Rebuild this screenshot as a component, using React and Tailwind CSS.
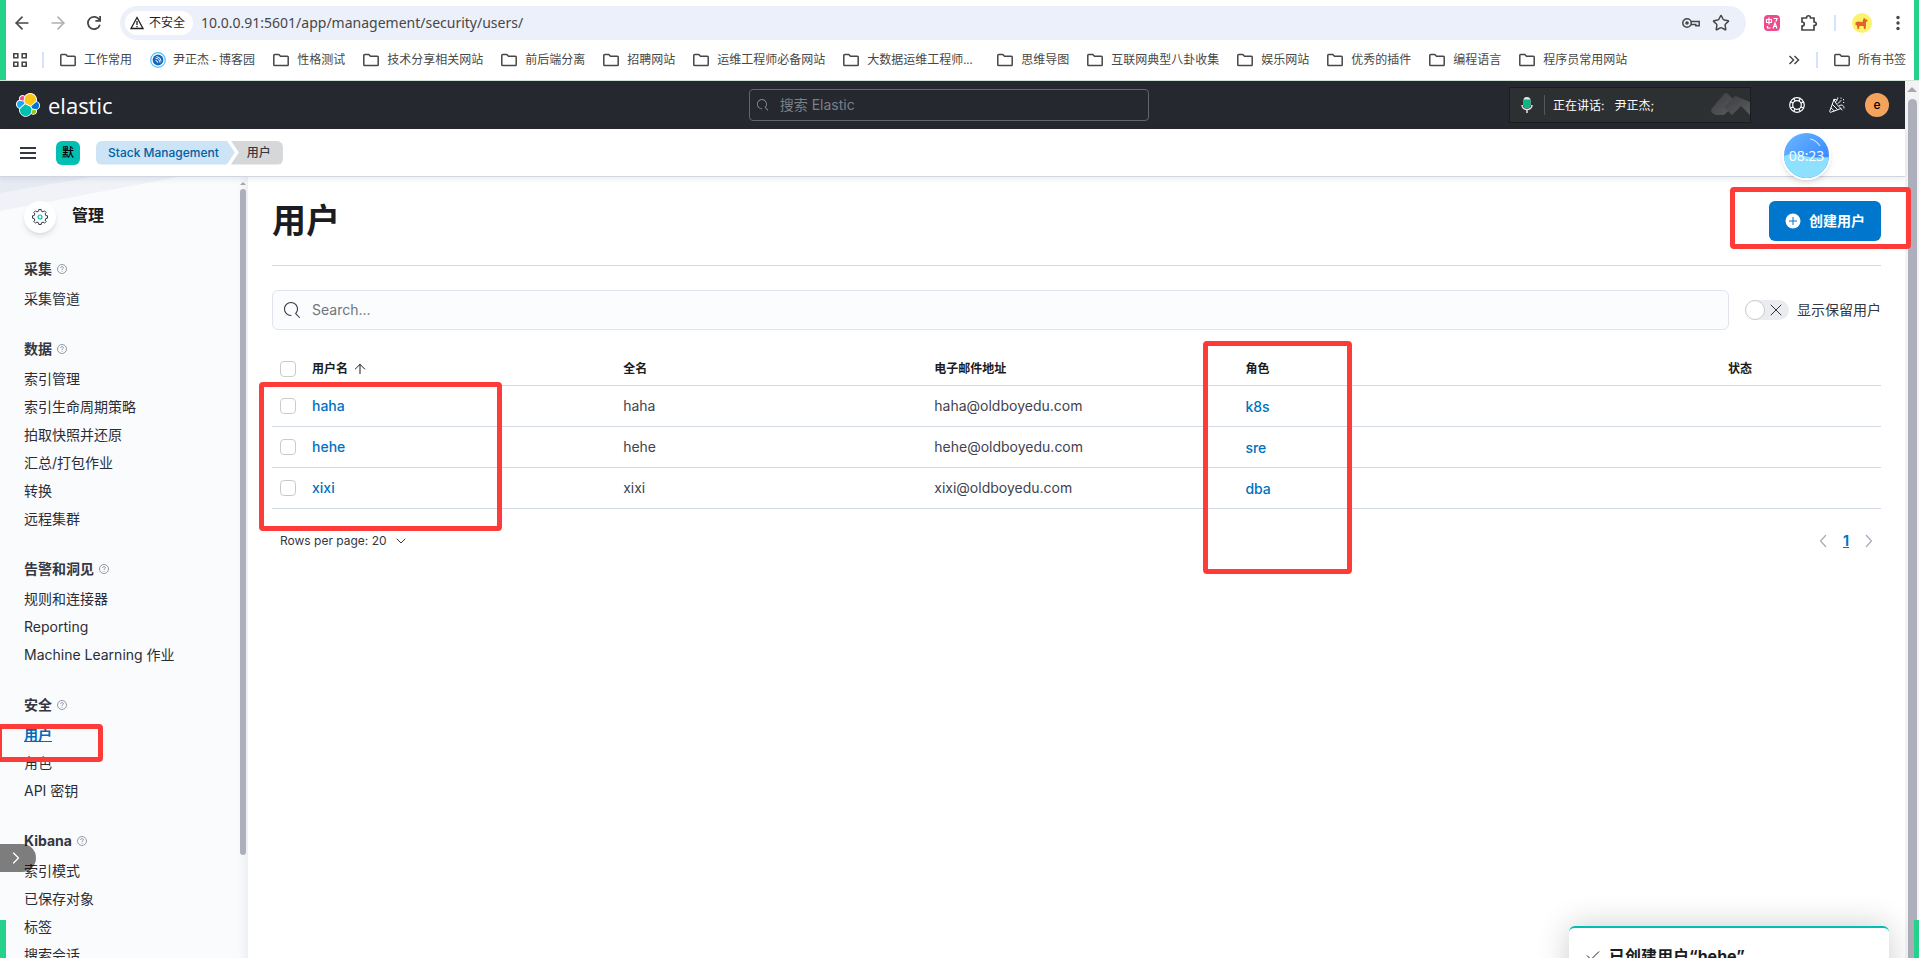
import React from 'react';
import { ArrowLeft, ArrowRight, ArrowUp, ChevronDown, ChevronRight, Star, X } from 'lucide-react';

const bookmarks = [
  { label: '工作常用' },
  { label: '尹正杰 - 博客园', blog: true },
  { label: '性格测试' },
  { label: '技术分享相关网站' },
  { label: '前后端分离' },
  { label: '招聘网站' },
  { label: '运维工程师必备网站' },
  { label: '大数据运维工程师...', wide: true },
  { label: '思维导图' },
  { label: '互联网典型八卦收集' },
  { label: '娱乐网站' },
  { label: '优秀的插件' },
  { label: '编程语言' },
  { label: '程序员常用网站' },
];

const sections = [
  { title: '采集', items: ['采集管道'] },
  { title: '数据', items: ['索引管理', '索引生命周期策略', '拍取快照并还原', '汇总/打包作业', '转换', '远程集群'] },
  { title: '告警和洞见', items: ['规则和连接器', 'Reporting', 'Machine Learning 作业'] },
  { title: '安全', items: ['用户', '角色', 'API 密钥'] },
  { title: 'Kibana', items: ['索引模式', '已保存对象', '标签', '搜索会话'] },
];

const users = [
  { name: 'haha', email: 'haha@oldboyedu.com', role: 'k8s' },
  { name: 'hehe', email: 'hehe@oldboyedu.com', role: 'sre' },
  { name: 'xixi', email: 'xixi@oldboyedu.com', role: 'dba' },
];

const checkbox = 'block size-4 appearance-none rounded border border-[#c9cbcd] bg-white';

function gearPath(teeth, outer, inner) {
  const step = (Math.PI * 2) / teeth;
  const points = [];
  for (let i = 0; i < teeth; i++) {
    [[-0.3, inner], [-0.2, outer], [0.2, outer], [0.3, inner]].forEach(([t, r]) => {
      const a = (i + t) * step;
      points.push(`${(8 + r * Math.sin(a)).toFixed(2)} ${(8 - r * Math.cos(a)).toFixed(2)}`);
    });
  }
  return `M${points.join('L')}Z`;
}

function FolderIcon() {
  return (
    <svg className="size-4 shrink-0" viewBox="0 0 16 16" fill="none" stroke="#474747" strokeWidth="1.5">
      <path d="M.8 3.2c0-.5.3-.8.8-.8h4.2l1.7 1.8h6.9c.5 0 .8.3.8.8v7.8c0 .5-.3.8-.8.8H1.6c-.5 0-.8-.3-.8-.8z" />
    </svg>
  );
}

function BlogIcon() {
  return (
    <svg className="size-4 shrink-0" viewBox="0 0 16 16">
      <circle cx="8" cy="8" r="7.3" fill="#fff" stroke="#4cc3f5" strokeWidth="1.2" />
      <circle cx="8" cy="8" r="5.4" fill="#1565c0" />
      <path d="M5.5 6.2a4.5 4.5 0 0 1 4.5 4.5M5.5 8.5a2.2 2.2 0 0 1 2.2 2.2M6.5 4.5a5.5 5.5 0 0 1 4.7 4.7" fill="none" stroke="#fff" />
    </svg>
  );
}

function SearchIcon({ className }) {
  return (
    <svg className={className} viewBox="0 0 16 16" fill="currentColor">
      <path d="M11.271 11.978l3.872 3.873a.502.502 0 00.708 0 .502.502 0 000-.708l-3.565-3.564c2.38-2.747 2.267-6.923-.342-9.532-2.73-2.73-7.17-2.73-9.898 0-2.728 2.729-2.728 7.17 0 9.9a6.955 6.955 0 004.949 2.05.5.5 0 000-1 5.96 5.96 0 01-4.242-1.757 6.01 6.01 0 010-8.486 6.004 6.004 0 018.484 0 6.01 6.01 0 010 8.486.5.5 0 00.034.738z" />
    </svg>
  );
}

function ElasticLogo() {
  return (
    <svg className="size-6" viewBox="0 0 32 32">
      <path fill="#fff" d="M32 16.77a6.334 6.334 0 00-1.14-3.63 6.269 6.269 0 00-3.02-2.3 9.098 9.098 0 00-.873-5.965A9.05 9.05 0 0022.56.746a9.007 9.007 0 00-5.994-.419 9.04 9.04 0 00-4.93 3.445 4.789 4.789 0 00-5.78-.07 4.833 4.833 0 00-1.672 2.34 4.85 4.85 0 00.024 2.879A6.383 6.383 0 001.15 11.23 6.424 6.424 0 000 14.9a6.35 6.35 0 001.144 3.646 6.284 6.284 0 003.04 2.304 9.15 9.15 0 00.88 5.966 9.1 9.1 0 004.412 4.127 9.058 9.058 0 005.994.418 9.09 9.09 0 004.93-3.45 4.774 4.774 0 005.776.077 4.82 4.82 0 001.67-2.34 4.836 4.836 0 00-.02-2.874 6.383 6.383 0 003.03-2.313A6.424 6.424 0 0032 16.77" />
      <path fill="#FEC514" d="M12.58 13.787l7.002 3.211 7.066-6.213a7.849 7.849 0 00.152-1.557c0-1.692-.538-3.339-1.534-4.7a7.915 7.915 0 00-4.012-2.868 7.872 7.872 0 00-4.92.08 7.912 7.912 0 00-3.918 3l-1.174 6.117 1.338 2.93z" />
      <path fill="#00BFB3" d="M5.333 21.228A7.964 7.964 0 005.18 22.8a7.98 7.98 0 001.54 4.722 7.944 7.944 0 004.03 2.883 7.903 7.903 0 004.943-.08 7.943 7.943 0 003.937-3.012l1.166-6.102-1.555-2.985-7.03-3.211-6.877 6.213z" />
      <path fill="#F04E98" d="M5.288 9.067l4.8 1.137L11.14 4.73a3.785 3.785 0 00-4.538-.023A3.82 3.82 0 005.288 9.067z" />
      <path fill="#1BA9F5" d="M4.872 10.214a5.294 5.294 0 00-2.594 1.93 5.325 5.325 0 00-.137 5.89 5.29 5.29 0 002.51 2.038l6.733-6.1-1.235-2.65-5.277-1.108z" />
      <path fill="#93C90E" d="M20.873 27.307a3.736 3.736 0 002.285.785 3.783 3.783 0 003.101-1.63 3.812 3.812 0 00.45-3.476l-4.8-1.125-1.036 5.446z" />
      <path fill="#0077CC" d="M21.848 20.563l5.28 1.238a5.34 5.34 0 002.622-1.937 5.37 5.37 0 001.023-3.1 5.31 5.31 0 00-.954-3.036 5.28 5.28 0 00-2.473-1.994l-6.904 6.067 1.406 2.762z" />
    </svg>
  );
}

function BrowserBar() {
  return (
    <div className="shrink-0 border-b border-[#d3e3d8] bg-white text-[#474747] [font-family:'Open_Sans','Noto_Sans_CJK_SC',sans-serif]">
      <div className="border-l-[6px] border-r-[5px] border-[#26d18c]">
        {/* Address row */}
        <div className="flex items-center py-1.5 pl-1.5">
          <div className="flex items-center gap-4">
            <button aria-label="后退"><ArrowLeft className="size-5" strokeWidth={2} /></button>
            <button aria-label="前进" className="text-[#b0b0b0]"><ArrowRight className="size-5" strokeWidth={2} /></button>
            <button aria-label="刷新">
              <svg className="size-5" viewBox="-1 -1 18 18" fill="none" stroke="currentColor" strokeWidth="1.6">
                <path d="M13.3 9.5A5.5 5.5 0 1 1 12.8 5.2M13.5 1.8v4.2H9.2" />
              </svg>
            </button>
          </div>
          <div className="ml-4 flex h-[34px] flex-1 items-center rounded-full bg-[#ecf0fa] pl-[5px] pr-4">
            <button className="flex h-6 items-center gap-[5px] rounded-full bg-white pr-2 pl-[5px] text-xs text-[#1f1f1f]">
              <svg className="size-3.5" viewBox="0 0 14 14" fill="none" stroke="currentColor" strokeWidth="1.3">
                <path d="M7 1.5 13 12.5H1zM7 5v4M7 10v1.3" />
              </svg>
              不安全
            </button>
            <input
              aria-label="地址"
              className="ml-2 flex-1 bg-transparent text-sm outline-none [font-family:'Noto_Sans',sans-serif]"
              defaultValue="10.0.0.91:5601/app/management/security/users/"
            />
            <svg className="h-4 w-[18px]" viewBox="0 0 18 16" fill="none" stroke="currentColor" strokeWidth="1.5">
              <circle cx="5" cy="8" r="4.2" />
              <circle cx="5" cy="8" r="1.8" fill="currentColor" stroke="none" />
              <path d="M9 6.5h8.2v4.2h-3.4V9.5H9" />
            </svg>
            <Star className="ml-3 size-[18px]" strokeWidth={2} />
          </div>
          <div className="flex items-center pl-[18px] pr-1.5">
            <span className="flex size-4 items-center justify-center rounded-sm bg-[#ec4b8c]">
              <svg className="size-4" viewBox="0 0 16 16" fill="none" stroke="#fff" strokeWidth="1.2">
                <path d="M2.5 4.5h5v3h-5zM5 2.5v7M9.5 3.5h3.5l-1 3M3.5 11v2h3M9 13.5l2-5.5 2 5.5M9.8 11.5h2.5" />
              </svg>
            </span>
            <svg className="ml-5 size-[18px]" viewBox="0 0 18 18" fill="none" stroke="currentColor" strokeWidth="1.7">
              <path d="M2 4h4.5c0-3 4-3 4 0H14v4c3 0 3 3.5 0 3.5V16H2v-4c3 0 3-4 0-4z" />
            </svg>
            <span className="ml-4 h-4 w-0.5 bg-[#d3e3fd]" />
            <svg className="ml-4 size-5" viewBox="0 0 20 20">
              <circle cx="10" cy="10" r="10" fill="#fdf36b" />
              <path d="M3.5 9.5l2-1 5 .5.5-2 1-2.500 1 1.500 1.500.5 1.500 1.500-2 1v3.500l-.5 3.500h-1.500l-.5-3H7.500l-.5 3H5.500L5 12.500l-1.500-.5z" fill="#e2622b" />
            </svg>
            <svg className="ml-4 h-4 w-5" viewBox="0 0 20 16" fill="currentColor">
              <circle cx="10" cy="2.5" r="1.7" /><circle cx="10" cy="8" r="1.7" /><circle cx="10" cy="13.5" r="1.7" />
            </svg>
          </div>
        </div>

        {/* Bookmarks */}
        <div className="flex h-[34px] items-center pb-1.5 pl-[7px] pr-2 text-xs">
          <svg className="size-3.5" viewBox="0 0 14 14" fill="none" stroke="currentColor" strokeWidth="1.6">
            <path d="M.8.8h4v4h-4zM9.2.8h4v4h-4zM.8 9.2h4v4h-4zM9.2 9.2h4v4h-4z" />
          </svg>
          <span className="ml-[15px] mr-4 h-4 w-0.5 bg-[#d3e3fd]" />
          <div className="flex flex-1 gap-[18px] overflow-hidden">
            {bookmarks.map((b) => (
              <a key={b.label} href="#" className={b.wide ? 'flex w-[136px] items-center gap-2 whitespace-nowrap' : b.blog ? 'flex items-center gap-[7px] whitespace-nowrap' : 'flex items-center gap-2 whitespace-nowrap'}>
                {b.blog ? <BlogIcon /> : <FolderIcon />}
                {b.label}
              </a>
            ))}
          </div>
          <svg className="size-3" viewBox="0 0 12 12" fill="none" stroke="currentColor" strokeWidth="1.5">
            <path d="M1.5 2l4 4-4 4M6.5 2l4 4-4 4" />
          </svg>
          <span className="ml-4 mr-4 h-4 w-0.5 bg-[#d3e3fd]" />
          <a href="#" className="flex items-center gap-2"><FolderIcon />所有书签</a>
        </div>
      </div>
    </div>
  );
}

function TopHeader() {
  return (
    <header className="grid h-12 shrink-0 grid-cols-[1fr_400px_1fr_8px] items-center bg-[#25282f] px-4">
      <a href="#" className="flex items-center gap-2 text-white">
        <ElasticLogo />
        <span className="text-[22px] leading-6 [font-family:'Open_Sans',sans-serif]">elastic</span>
      </a>
      <div className="flex h-8 items-center gap-3 rounded border border-[#63666c] px-[7px] text-[#81858f]">
        <SearchIcon className="size-3 text-[#9a9da3]" />
        <input aria-label="搜索 Elastic" placeholder="搜索 Elastic" className="w-full bg-transparent text-sm outline-none placeholder:text-[#7b7f87]" />
      </div>
      <div className="col-span-2 flex items-center justify-end">
        {/* Speaking indicator of the meeting app */}
        <div className="relative flex h-9 w-[242px] items-center overflow-hidden border border-[#1b1c1e] bg-[#2d3033] pl-2.5 text-xs text-white">
          <svg className="h-4 w-3.5" viewBox="0 0 14 16" fill="none">
            <rect x="3.5" y="0" width="7" height="11" rx="3.5" fill="#e6e6e6" />
            <path d="M3.5 2.5h7v5a3.5 3.5 0 0 1-7 0z" fill="#0bb680" />
            <path d="M2 8c0 6 10 6 10 0M7 12.5V16" stroke="#e6e6e6" strokeWidth="1.5" />
          </svg>
          <span className="ml-2.5 mr-2 h-5 w-px bg-[#54575a]" />
          <span className="pt-0.5">正在讲话:</span>
          <span className="ml-2.5 pt-0.5">尹正杰;</span>
          <svg className="absolute right-0 bottom-1.5 h-6 w-10" viewBox="0 0 40 24">
            <defs>
              <linearGradient id="peak" x1="0" y1="0" x2="1" y2="1">
                <stop offset="0" stopColor="#3a3c3f" />
                <stop offset="1" stopColor="#5b5d60" />
              </linearGradient>
            </defs>
            <path d="M3 15 14 2q2-2 4 0l9 9-13 12H6Q-2 20 3 15z" fill="url(#peak)" />
            <path d="M14 15 24 5q2-2 4 0l12 5v13L31 14l-9 9z" fill="url(#peak)" />
          </svg>
        </div>
        <button aria-label="帮助" className="ml-[38px] text-white">
          <svg className="size-4" viewBox="0 0 16 16" fill="none" stroke="currentColor" strokeWidth="1.2">
            <circle cx="8" cy="8" r="7.3" /><circle cx="8" cy="8" r="4.3" />
            <path d="M4.800 1.400l1.300 2.800M1.400 4.800l2.800 1.300M11.200 1.400L9.900 4.200M14.600 4.800l-2.800 1.300M4.800 14.600l1.300-2.800M1.400 11.200l2.800-1.300M11.200 14.600l-1.300-2.800M14.600 11.200l-2.800-1.300" />
          </svg>
        </button>
        <button aria-label="新闻" className="ml-6 text-white">
          <svg className="size-4" viewBox="0 0 16 16" fill="none" stroke="currentColor" strokeLinejoin="round" strokeLinecap="round">
            <path d="M5 2.5.7 14.4c-.2.6.3 1.1.9.9L12 11.5C10 10 6 6 5 2.5zM3.5 7.5l5 5M2.200 11l3 3M5 2.500c1.500-1 3 .5 3 .5M7 4.500c1-2 2-2.500 1.800-3.700M10.500 8.500c2-1 4.500-.5 4.500 2.500M9 6.500l3-3M12 1v.3M14.500 2.500v.3M14.500 5.500h.3M12 11.500l1 1.500" />
          </svg>
        </button>
        <button className="ml-5 flex size-6 items-center justify-center rounded-full bg-[#f5a35c] text-xs font-medium text-black">e</button>
      </div>
    </header>
  );
}

function SubHeader() {
  return (
    <div className="relative z-10 flex h-12 shrink-0 items-center border-b border-[#cfd5e3] bg-white px-5 shadow-[0_2px_6px_rgba(0,0,0,0.08)]">
      <button aria-label="菜单" className="flex w-4 flex-col gap-[3px]">
        <span className="h-0.5 w-4 bg-[#343741]" />
        <span className="h-0.5 w-4 bg-[#343741]" />
        <span className="h-0.5 w-4 bg-[#343741]" />
      </button>
      <button className="ml-5 flex size-6 items-center justify-center rounded-md bg-[#00bfb3] text-xs font-medium text-black">默</button>
      <nav className="ml-4 flex text-xs leading-6 font-medium">
        <a href="#" className="rounded-l-md bg-[#cce4f5] pr-4 pl-3 text-[#0061a6] [clip-path:polygon(0_0,calc(100%-8px)_0,100%_50%,calc(100%-8px)_100%,0_100%)]">
          Stack Management
        </a>
        <span className="-ml-1 rounded-r-md bg-[#d6d7d9] pr-3 pl-4 text-[#343741] [clip-path:polygon(0_0,100%_0,100%_100%,0_100%,8px_50%)]">
          用户
        </span>
      </nav>
    </div>
  );
}

function Sidebar() {
  return (
    <aside className="relative flex w-[248px] shrink-0 overflow-hidden bg-[#fafbfd]">
      <svg className="absolute top-0 left-0 h-9 w-[180px]" viewBox="0 0 180 36">
        <path d="M0 0h178L0 34z" fill="#f0f2f7" />
        <path d="M0 0h91L0 16z" fill="#e6eaf2" />
      </svg>
      <div className="relative flex-1 px-6 pt-6">
        <div className="flex h-8 items-start gap-4">
          <span className="flex size-8 items-center justify-center rounded-full bg-white shadow-md">
            <svg className="size-4" viewBox="0 0 16 16" fill="none">
              <path d={gearPath(8, 7.6, 6)} stroke="#343741" strokeLinejoin="round" />
              <circle cx="8" cy="8" r="2" stroke="#00bfb3" strokeWidth="1.2" />
            </svg>
          </span>
          <h2 className="text-base leading-7 font-bold text-[#1a1c21]">管理</h2>
        </div>
        {sections.map((section) => (
          <div key={section.title} className="mt-6">
            <div className="mb-1 flex h-6 items-center gap-[5px] text-sm font-bold text-[#343741]">
              {section.title}
              <svg className="size-2.5" viewBox="0 0 10 10" fill="none" stroke="#7b8090" strokeWidth="0.8">
                <circle cx="5" cy="5" r="4.5" />
                <path d="M3.6 4c0-1.8 2.8-1.8 2.8-.2C6.4 4.8 5 4.7 5 6M5 6.8v.9" />
              </svg>
            </div>
            {section.items.map((item) => (
              <a
                key={item}
                href="#"
                className={item === '用户'
                  ? 'block text-sm leading-7 font-bold whitespace-nowrap text-[#006bb8] underline'
                  : 'block text-sm leading-7 whitespace-nowrap text-[#2a2d35]'}
              >
                {item}
              </a>
            ))}
          </div>
        ))}
      </div>
      <div className="absolute inset-y-0 right-0 flex w-2.5 flex-col items-center bg-gradient-to-r from-[#fafbfd] to-[#eff0f3]">
        <svg className="mt-1 h-1.5 w-1.5 shrink-0" viewBox="0 0 6 6"><path d="M3 1l3 3H0z" fill="#a5a8b0" /></svg>
        <span className="mt-0.5 h-[666px] w-1.5 shrink-0 rounded-full bg-[#adb0ba]" />
      </div>
    </aside>
  );
}

function UsersPage() {
  return (
    <main className="min-w-0 flex-1 bg-white p-6 text-[#343741]">
      <div className="flex h-10 items-center justify-between">
        <h1 className="text-[34px] leading-10 font-bold text-[#1a1c21]">用户</h1>
        <button className="flex h-10 items-center gap-2 rounded-md bg-[#0077cc] px-4 text-sm font-bold text-white">
          <svg className="size-4" viewBox="0 0 16 16">
            <circle cx="8" cy="8" r="7.5" fill="#fff" />
            <path d="M8 4v8M4 8h8" stroke="#0077cc" />
          </svg>
          创建用户
        </button>
      </div>
      <hr className="my-6 border-[#d3dae6]" />

      <div className="flex items-center gap-4">
        <div className="flex h-10 flex-1 items-center gap-3 rounded-md border border-[#e1e4f0] bg-[#fbfcfd] px-[11px]">
          <SearchIcon className="size-4 text-[#343741]" />
          <input aria-label="Search" placeholder="Search..." className="flex-1 bg-transparent text-sm outline-none placeholder:text-[#6f7480]" />
        </div>
        <label className="flex items-center gap-2 text-sm">
          <input type="checkbox" role="switch" className="sr-only" />
          <span className="flex h-5 w-11 items-center gap-px rounded-full bg-[#ebecef]">
            <span className="size-5 rounded-full border border-[#c9cbcd] bg-white" />
            <X className="size-5" strokeWidth={1.2} />
          </span>
          显示保留用户
        </label>
      </div>

      <table className="mt-[22px] w-full table-fixed border-collapse text-left text-sm">
        <thead>
          <tr className="h-[33px] border-b border-[#d3dae6] text-xs text-[#1a1c21]">
            <th className="w-8 pt-0.5 pl-2"><input type="checkbox" aria-label="全选" className={checkbox} /></th>
            <th className="px-2 pt-0.5 font-bold">
              <button className="flex items-center gap-1">用户名 <ArrowUp className="size-4" strokeWidth={1.5} /></button>
            </th>
            <th className="px-2 pt-0.5 font-bold">全名</th>
            <th className="px-2 pt-0.5 font-bold">电子邮件地址</th>
            <th className="w-[30%] px-2 pt-0.5 font-bold">角色</th>
            <th className="w-[10%] px-2 pt-0.5 font-bold">状态</th>
          </tr>
        </thead>
        <tbody>
          {users.map((user) => (
            <tr key={user.name} className="h-[41px] border-b border-[#d3dae6] text-[#404350]">
              <td className="pl-2"><input type="checkbox" aria-label={user.name} className={checkbox} /></td>
              <td className="px-2"><a href="#" className="font-medium text-[#0071c2]">{user.name}</a></td>
              <td className="px-2">{user.name}</td>
              <td className="px-2">{user.email}</td>
              <td className="px-2 pt-0.5"><a href="#" className="font-medium text-[#0071c2]">{user.role}</a></td>
              <td />
            </tr>
          ))}
        </tbody>
      </table>

      <div className="mt-4 flex h-8 items-center justify-between px-2">
        <button className="flex items-center gap-1.5 text-xs">Rows per page: 20 <ChevronDown className="size-4" strokeWidth={1.5} /></button>
        <div className="flex items-center gap-4 text-[#a6abb9]">
          <button aria-label="Previous">
            <svg className="h-3.5 w-2" viewBox="0 0 8 14" fill="none" stroke="currentColor" strokeWidth="1.2"><path d="M7 1 1.5 7 7 13" /></svg>
          </button>
          <a href="#" className="text-sm font-bold text-[#0077cc] underline">1</a>
          <button aria-label="Next">
            <svg className="h-3.5 w-2" viewBox="0 0 8 14" fill="none" stroke="currentColor" strokeWidth="1.2"><path d="M1 1l5.5 6L1 13" /></svg>
          </button>
        </div>
      </div>
    </main>
  );
}

export default function App() {
  return (
    <div className="relative flex h-screen flex-col overflow-hidden bg-white [font-family:Inter,'Noto_Sans_CJK_SC',sans-serif]">
      <BrowserBar />
      <div className="flex min-h-0 flex-1">
        <div className="flex min-w-0 flex-1 flex-col">
          <TopHeader />
          <SubHeader />
          <div className="flex min-h-0 flex-1">
            <Sidebar />
            <UsersPage />
          </div>
        </div>
        {/* Window scrollbar */}
        <div className="flex w-3.5 flex-col items-center bg-[#f3f3f6] pt-1.5">
          <svg className="h-1.5 w-2.5 shrink-0" viewBox="0 0 10 6"><path d="M5 0l5 5H0z" fill="#a5a8b0" /></svg>
          <span className="mt-1.5 w-[9px] flex-1 rounded-t-full bg-[#adb0ba]" />
        </div>
      </div>

      {/* Toast */}
      <div className="absolute top-[926px] right-[30px] z-20 flex h-20 w-80 items-start gap-2 rounded-md border-t-2 border-[#00bfb3] bg-white px-4 pt-4 shadow-[0_0_32px_rgba(0,0,0,0.2)]">
        <svg className="mt-1 size-4" viewBox="0 0 16 16" fill="none" stroke="#1a1c21"><path d="M2 7.500l4 4 8-8" /></svg>
        <span className="text-base leading-6 font-bold text-[#1a1c21]">已创建用户“hehe”</span>
      </div>

      {/* Floating clock */}
      <div className="absolute top-[131px] right-[88px] z-20 flex size-[49px] items-center justify-center overflow-hidden rounded-full border-2 border-white bg-gradient-to-br from-[#6cb6ff] to-[#2b7cff] text-sm text-white shadow-md [font-family:'Open_Sans',sans-serif]">
        <svg className="absolute inset-0 size-full" viewBox="0 0 45 45">
          <path d="M0 23c14-6 18 4 45 1v22H0z" fill="#8ee0ff" />
          <path d="M26 6q6 1 10 7" fill="none" stroke="#bfe0ff" strokeWidth="1.2" />
        </svg>
        <span className="relative">08:23</span>
      </div>

      {/* Meeting drawer handle */}
      <button aria-label="展开" className="absolute top-[844px] left-0 z-20 flex h-7 w-9 items-center justify-center rounded-r-full bg-black/50 pr-1 text-white">
        <ChevronRight className="size-5" strokeWidth={1.5} />
      </button>

      {/* Screen share frame */}
      <span className="absolute bottom-0 left-0 z-20 h-[38px] w-1.5 bg-[#26d18c]" />
      <span className="absolute right-0 bottom-0 z-20 h-[38px] w-[5px] bg-[#26d18c]" />

      {/* Highlights */}
      <span className="absolute top-[187px] right-2 z-30 h-[62px] w-[181px] rounded border-5 border-[#ff3b39]" />
      <span className="absolute top-[382px] left-[259px] z-30 h-[149px] w-[243px] rounded border-5 border-[#ff3b39]" />
      <span className="absolute top-[341px] left-[1203px] z-30 h-[233px] w-[149px] rounded border-5 border-[#ff3b39]" />
      <span className="absolute top-[724px] -left-[3px] z-30 h-[38px] w-[106px] rounded border-5 border-[#ff3b39]" />
    </div>
  );
}
